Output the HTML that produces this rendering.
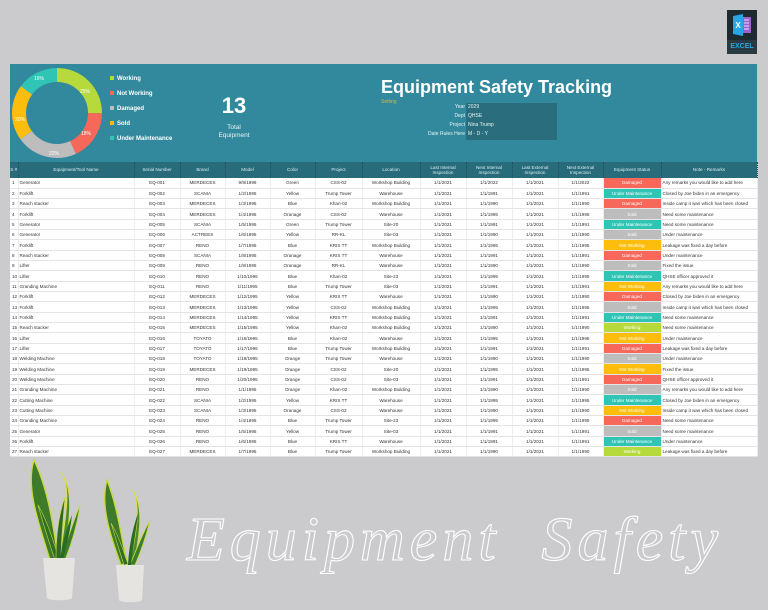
<!DOCTYPE html>
<html><head><meta charset="utf-8">
<style>
*{margin:0;padding:0;box-sizing:border-box}
body{width:768px;height:610px;background:#cbcbcd;position:relative;overflow:hidden;font-family:"Liberation Sans",sans-serif}
.a{position:absolute}
#hdr{left:10px;top:64px;width:747px;height:98px;background:#32889c}
table{position:absolute;left:10px;top:162px;width:747px;border-collapse:collapse;table-layout:fixed;font-size:4.6px;color:#333}
th{background:#286b7a;color:#d8eef2;font-weight:normal;height:16px;border-right:1px dotted #1d4f5b;line-height:5.5px}
td{height:10.33px;border-bottom:1px solid #e4e4e4;border-right:1px solid #eee;background:#fff;text-align:center;white-space:nowrap;overflow:hidden;padding:0 1px}
td:nth-child(2),td:last-child{text-align:left}
td:first-child{text-align:left;padding-left:2px}
.D{background:#f7675a;color:#fff}.U{background:#2fc4b4;color:#fff}.S{background:#bdbdbd;color:#fff}.N{background:#fdbd0d;color:#fff}.W{background:#b6da3c;color:#fff}
.leg{position:absolute;left:110px;font-size:6px;color:#fff;font-weight:bold}
.leg i{display:inline-block;width:4px;height:4px;margin-right:3px}
.lab{position:absolute;left:400px;width:65px;text-align:right;color:#e8f4f6;font-size:5px}
.val{position:absolute;left:468px;color:#e8f4f6;font-size:5px}
</style></head><body>
<div id="hdr" class="a"></div>
<svg class="a" style="left:10px;top:66px" width="94" height="94" viewBox="0 0 94 94">
<g transform="rotate(-90 47 47)" fill="none" stroke-width="14">
<circle cx="47" cy="47" r="38" stroke="#b6da3c" stroke-dasharray="59.7 300" stroke-dashoffset="0"/>
<circle cx="47" cy="47" r="38" stroke="#f7675a" stroke-dasharray="43 300" stroke-dashoffset="-59.7"/>
<circle cx="47" cy="47" r="38" stroke="#bdbdbd" stroke-dasharray="52.5 300" stroke-dashoffset="-102.7"/>
<circle cx="47" cy="47" r="38" stroke="#fdbd0d" stroke-dasharray="47.8 300" stroke-dashoffset="-155.2"/>
<circle cx="47" cy="47" r="38" stroke="#2fc4b4" stroke-dasharray="35.8 300" stroke-dashoffset="-203"/>
</g>
<g fill="#fff" font-size="5" font-family="Liberation Sans" text-anchor="middle">
<text x="75" y="27">25%</text><text x="76" y="69">18%</text><text x="44" y="89">22%</text><text x="10" y="55">20%</text><text x="29" y="14">16%</text>
</g></svg>
<div class="leg" style="top:76px"><i style="background:#b6da3c"></i>Working</div>
<div class="leg" style="top:91px"><i style="background:#f7675a"></i>Not Working</div>
<div class="leg" style="top:106px"><i style="background:#bdbdbd"></i>Damaged</div>
<div class="leg" style="top:121px"><i style="background:#fdbd0d"></i>Sold</div>
<div class="leg" style="top:136px"><i style="background:#2fc4b4"></i>Under Maintenance</div>
<div class="a" style="left:200px;top:93px;width:68px;text-align:center;color:#fff;font-size:22px;font-weight:bold">13</div>
<div class="a" style="left:200px;top:124px;width:68px;text-align:center;color:#e8f4f6;font-size:6.5px;line-height:8px">Total<br>Equipment</div>
<div class="a" style="left:381px;top:77px;color:#fff;font-size:18px;font-weight:bold">Equipment Safety Tracking</div>
<div class="a" style="left:381px;top:99px;color:#c9b94a;font-size:5px">Setting</div>
<div class="a" style="left:466px;top:103px;width:91px;height:37px;background:#2a6d7c"></div>
<div class="lab" style="top:104px">Year</div><div class="val" style="top:104px">2029</div>
<div class="lab" style="top:113px">Dept</div><div class="val" style="top:113px">QHSE</div>
<div class="lab" style="top:122px">Project</div><div class="val" style="top:122px">Nina Trump</div>
<div class="lab" style="top:131px">Date Rules Here</div><div class="val" style="top:131px">M - D - Y</div>
<table>
<colgroup><col style="width:8px"><col style="width:116px"><col style="width:46px"><col style="width:45px"><col style="width:45px"><col style="width:45px"><col style="width:47px"><col style="width:58px"><col style="width:46px"><col style="width:46px"><col style="width:46px"><col style="width:45px"><col style="width:58px"><col style="width:96px"></colgroup>
<tr><th>S #</th><th>Equipment/Tool Name</th><th>Serial Number</th><th>Brand</th><th>Model</th><th>Color</th><th>Project</th><th>Location</th><th>Last Internal Inspection</th><th>Next Internal Inspection</th><th>Last External Inspection</th><th>Next External Inspection</th><th>Equipment Status</th><th>Note - Remarks</th></tr>
<tr><td>1</td><td>Generator</td><td>EQ-001</td><td>MERDECES</td><td>9/9/1999</td><td>Green</td><td>CSS-02</td><td>Workshop Building</td><td>1/1/2021</td><td>1/1/2022</td><td>1/1/2021</td><td>1/1/2022</td><td class="D">Damaged</td><td>Any remarks you would like to add here</td></tr>
<tr><td>2</td><td>Forklift</td><td>EQ-002</td><td>SCANIA</td><td>1/2/1995</td><td>Yellow</td><td>Trump Tower</td><td>Warehouse</td><td>1/1/2021</td><td>1/1/1991</td><td>1/1/2021</td><td>1/1/1991</td><td class="U">Under Maintenance</td><td>Closed by Joe biden in an emergency</td></tr>
<tr><td>3</td><td>Reach stacker</td><td>EQ-003</td><td>MERDECES</td><td>1/3/1995</td><td>Blue</td><td>Khan-02</td><td>Workshop Building</td><td>1/1/2021</td><td>1/1/1990</td><td>1/1/2021</td><td>1/1/1990</td><td class="D">Damaged</td><td>Inside camp it was which has been closed</td></tr>
<tr><td>4</td><td>Forklift</td><td>EQ-004</td><td>MERDECES</td><td>1/4/1995</td><td>Oranage</td><td>CSS-02</td><td>Warehouse</td><td>1/1/2021</td><td>1/1/1995</td><td>1/1/2021</td><td>1/1/1995</td><td class="S">Sold</td><td>Need some maintenance</td></tr>
<tr><td>5</td><td>Generator</td><td>EQ-005</td><td>SCANIA</td><td>1/5/1995</td><td>Green</td><td>Trump Tower</td><td>Site-20</td><td>1/1/2021</td><td>1/1/1991</td><td>1/1/2021</td><td>1/1/1991</td><td class="U">Under Maintenance</td><td>Need some maintenance</td></tr>
<tr><td>6</td><td>Generator</td><td>EQ-006</td><td>ACTREES</td><td>1/6/1995</td><td>Yellow</td><td>RR-KL</td><td>Site-03</td><td>1/1/2021</td><td>1/1/1990</td><td>1/1/2021</td><td>1/1/1990</td><td class="S">Sold</td><td>Under maintenance</td></tr>
<tr><td>7</td><td>Forklift</td><td>EQ-007</td><td>RENO</td><td>1/7/1995</td><td>Blue</td><td>KRIS TT</td><td>Workshop Building</td><td>1/1/2021</td><td>1/1/1995</td><td>1/1/2021</td><td>1/1/1995</td><td class="N">Not Working</td><td>Leakage was fixed a day before</td></tr>
<tr><td>8</td><td>Reach stacker</td><td>EQ-008</td><td>SCANIA</td><td>1/8/1995</td><td>Oranage</td><td>KRIS TT</td><td>Warehouse</td><td>1/1/2021</td><td>1/1/1991</td><td>1/1/2021</td><td>1/1/1991</td><td class="D">Damaged</td><td>Under maintenance</td></tr>
<tr><td>9</td><td>Lifter</td><td>EQ-009</td><td>RENO</td><td>1/9/1995</td><td>Oranage</td><td>RR-KL</td><td>Warehouse</td><td>1/1/2021</td><td>1/1/1990</td><td>1/1/2021</td><td>1/1/1990</td><td class="S">Sold</td><td>Fixed the issue</td></tr>
<tr><td>10</td><td>Lifter</td><td>EQ-010</td><td>RENO</td><td>1/10/1995</td><td>Blue</td><td>Khan-02</td><td>Site-23</td><td>1/1/2021</td><td>1/1/1995</td><td>1/1/2021</td><td>1/1/1995</td><td class="U">Under Maintenance</td><td>QHSE officer approved it</td></tr>
<tr><td>11</td><td>Granding Machine</td><td>EQ-011</td><td>RENO</td><td>1/11/1995</td><td>Blue</td><td>Trump Tower</td><td>Site-03</td><td>1/1/2021</td><td>1/1/1991</td><td>1/1/2021</td><td>1/1/1991</td><td class="N">Not Working</td><td>Any remarks you would like to add here</td></tr>
<tr><td>12</td><td>Forklift</td><td>EQ-012</td><td>MERDECES</td><td>1/12/1995</td><td>Yellow</td><td>KRIS TT</td><td>Warehouse</td><td>1/1/2021</td><td>1/1/1990</td><td>1/1/2021</td><td>1/1/1990</td><td class="D">Damaged</td><td>Closed by Joe biden in an emergency</td></tr>
<tr><td>13</td><td>Forklift</td><td>EQ-013</td><td>MERDECES</td><td>1/13/1995</td><td>Yellow</td><td>CSS-02</td><td>Workshop Building</td><td>1/1/2021</td><td>1/1/1995</td><td>1/1/2021</td><td>1/1/1995</td><td class="S">Sold</td><td>Inside camp it was which has been closed</td></tr>
<tr><td>14</td><td>Forklift</td><td>EQ-014</td><td>MERDECES</td><td>1/14/1995</td><td>Yellow</td><td>KRIS TT</td><td>Workshop Building</td><td>1/1/2021</td><td>1/1/1991</td><td>1/1/2021</td><td>1/1/1991</td><td class="U">Under Maintenance</td><td>Need some maintenance</td></tr>
<tr><td>15</td><td>Reach stacker</td><td>EQ-015</td><td>MERDECES</td><td>1/15/1995</td><td>Yellow</td><td>Khan-02</td><td>Workshop Building</td><td>1/1/2021</td><td>1/1/1990</td><td>1/1/2021</td><td>1/1/1990</td><td class="W">Working</td><td>Need some maintenance</td></tr>
<tr><td>16</td><td>Lifter</td><td>EQ-016</td><td>TOYATO</td><td>1/16/1995</td><td>Blue</td><td>Khan-02</td><td>Warehouse</td><td>1/1/2021</td><td>1/1/1995</td><td>1/1/2021</td><td>1/1/1995</td><td class="N">Not Working</td><td>Under maintenance</td></tr>
<tr><td>17</td><td>Lifter</td><td>EQ-017</td><td>TOYATO</td><td>1/17/1995</td><td>Blue</td><td>Trump Tower</td><td>Workshop Building</td><td>1/1/2021</td><td>1/1/1991</td><td>1/1/2021</td><td>1/1/1991</td><td class="D">Damaged</td><td>Leakage was fixed a day before</td></tr>
<tr><td>18</td><td>Welding Machine</td><td>EQ-018</td><td>TOYATO</td><td>1/18/1995</td><td>Orange</td><td>Trump Tower</td><td>Warehouse</td><td>1/1/2021</td><td>1/1/1990</td><td>1/1/2021</td><td>1/1/1990</td><td class="S">Sold</td><td>Under maintenance</td></tr>
<tr><td>19</td><td>Welding Machine</td><td>EQ-019</td><td>MERDECES</td><td>1/19/1995</td><td>Orange</td><td>CSS-02</td><td>Site-20</td><td>1/1/2021</td><td>1/1/1995</td><td>1/1/2021</td><td>1/1/1995</td><td class="N">Not Working</td><td>Fixed the issue</td></tr>
<tr><td>20</td><td>Welding Machine</td><td>EQ-020</td><td>RENO</td><td>1/20/1995</td><td>Orange</td><td>CSS-02</td><td>Site-03</td><td>1/1/2021</td><td>1/1/1991</td><td>1/1/2021</td><td>1/1/1991</td><td class="D">Damaged</td><td>QHSE officer approved it</td></tr>
<tr><td>21</td><td>Granding Machine</td><td>EQ-021</td><td>RENO</td><td>1/1/1995</td><td>Orange</td><td>Khan-02</td><td>Workshop Building</td><td>1/1/2021</td><td>1/1/1990</td><td>1/1/2021</td><td>1/1/1990</td><td class="S">Sold</td><td>Any remarks you would like to add here</td></tr>
<tr><td>22</td><td>Cutting Machine</td><td>EQ-022</td><td>SCANIA</td><td>1/2/1995</td><td>Yellow</td><td>KRIS TT</td><td>Warehouse</td><td>1/1/2021</td><td>1/1/1995</td><td>1/1/2021</td><td>1/1/1995</td><td class="U">Under Maintenance</td><td>Closed by Joe biden in an emergency</td></tr>
<tr><td>23</td><td>Cutting Machine</td><td>EQ-023</td><td>SCANIA</td><td>1/3/1995</td><td>Oranage</td><td>CSS-02</td><td>Warehouse</td><td>1/1/2021</td><td>1/1/1990</td><td>1/1/2021</td><td>1/1/1990</td><td class="N">Not Working</td><td>Inside camp it was which has been closed</td></tr>
<tr><td>24</td><td>Granding Machine</td><td>EQ-024</td><td>RENO</td><td>1/4/1995</td><td>Blue</td><td>Trump Tower</td><td>Site-23</td><td>1/1/2021</td><td>1/1/1995</td><td>1/1/2021</td><td>1/1/1995</td><td class="D">Damaged</td><td>Need some maintenance</td></tr>
<tr><td>25</td><td>Generator</td><td>EQ-025</td><td>RENO</td><td>1/5/1995</td><td>Yellow</td><td>Trump Tower</td><td>Site-03</td><td>1/1/2021</td><td>1/1/1991</td><td>1/1/2021</td><td>1/1/1991</td><td class="S">Sold</td><td>Need some maintenance</td></tr>
<tr><td>26</td><td>Forklift</td><td>EQ-026</td><td>RENO</td><td>1/6/1995</td><td>Blue</td><td>KRIS TT</td><td>Warehouse</td><td>1/1/2021</td><td>1/1/1991</td><td>1/1/2021</td><td>1/1/1991</td><td class="U">Under Maintenance</td><td>Under maintenance</td></tr>
<tr><td>27</td><td>Reach stacker</td><td>EQ-027</td><td>MERDECES</td><td>1/7/1995</td><td>Blue</td><td>Trump Tower</td><td>Workshop Building</td><td>1/1/2021</td><td>1/1/1990</td><td>1/1/2021</td><td>1/1/1990</td><td class="W">Working</td><td>Leakage was fixed a day before</td></tr>
</table>
<!-- excel icon -->
<div class="a" style="left:727px;top:10px;width:30px;height:44px;background:#1d2a30"></div>
<div class="a" style="left:727px;top:40px;width:30px;height:14px;background:#2a3a42"></div>
<svg class="a" style="left:730px;top:13px" width="24" height="24" viewBox="0 0 24 24">
<rect x="12" y="4" width="9" height="16" fill="#9b5fd0"/>
<g stroke="#dcc8f0" stroke-width="1.2"><line x1="14" y1="7" x2="19" y2="7"/><line x1="14" y1="10" x2="19" y2="10"/><line x1="14" y1="13" x2="19" y2="13"/><line x1="14" y1="16" x2="19" y2="16"/></g>
<path d="M3 3 L13 1 L13 23 L3 21 Z" fill="#2aa4e8"/>
<text x="8" y="15" font-size="8" fill="#fff" font-family="Liberation Sans" font-weight="bold" text-anchor="middle">X</text>
</svg>
<div class="a" style="left:727px;top:43px;width:30px;text-align:center;color:#29a8e0;font-size:7px;font-weight:bold">EXCEL</div>
<!-- plants -->
<svg class="a" style="left:0;top:455px" width="160" height="155" viewBox="0 0 160 155">
<g>
<path d="M34 5 C26 30 36 60 50 105 L58 103 C52 60 46 30 34 5Z" fill="#3d7a2a" stroke="#c9d840" stroke-width="1.4"/>
<path d="M61 17 C70 30 68 50 60 100 L64 100 C72 55 72 32 61 17Z" fill="#4a8a30" stroke="#d6e04a" stroke-width="1"/>
<path d="M38 50 C44 72 50 90 55 105 L59 104 C53 85 48 68 38 50Z" fill="#2f6e24" stroke="#c9d840" stroke-width="0.6"/>
<path d="M80 50 C72 70 66 90 60 105 L65 105 C71 90 77 72 80 50Z" fill="#3a7d2c" stroke="#c9d840" stroke-width="0.8"/>
<path d="M65 42 C58 62 56 85 56 105 L61 105 C61 85 63 65 65 42Z" fill="#2e6a24" stroke="#c9d840" stroke-width="0.6"/>
<path d="M72 60 C66 75 62 90 60 105 L63 105 C66 92 70 78 72 60Z" fill="#2a6a22"/>
<path d="M43 103 L75 103 L72 143 C70 146 48 146 47 143 Z" fill="#e6e4e0"/>
<path d="M107 25 C100 50 110 80 121 110 L127 108 C121 80 117 50 107 25Z" fill="#3d7a2a" stroke="#c9d840" stroke-width="1.4"/>
<path d="M133 35 C140 50 138 70 130 108 L134 108 C142 70 142 50 133 35Z" fill="#4a8a30" stroke="#d6e04a" stroke-width="1"/>
<path d="M150 65 C142 80 136 95 130 110 L135 110 C141 96 146 82 150 65Z" fill="#3a7d2c" stroke="#c9d840" stroke-width="0.8"/>
<path d="M111 68 C116 84 120 98 124 110 L128 109 C123 95 119 82 111 68Z" fill="#2f6e24" stroke="#c9d840" stroke-width="0.6"/>
<path d="M138 58 C132 76 129 92 128 110 L131 110 C133 92 136 76 138 58Z" fill="#2a6a22"/>
<path d="M116 110 L144 110 L142 145 C140 148 120 148 119 145 Z" fill="#e6e4e0"/>
</g></svg>
<div class="a" style="left:165px;top:505px;width:580px;text-align:center;color:transparent;-webkit-text-stroke:1.1px #fff;font-family:'Liberation Serif',serif;font-style:italic;font-size:62px;letter-spacing:5px;white-space:nowrap">Equipment&nbsp;&nbsp;Safety</div>
</body></html>
